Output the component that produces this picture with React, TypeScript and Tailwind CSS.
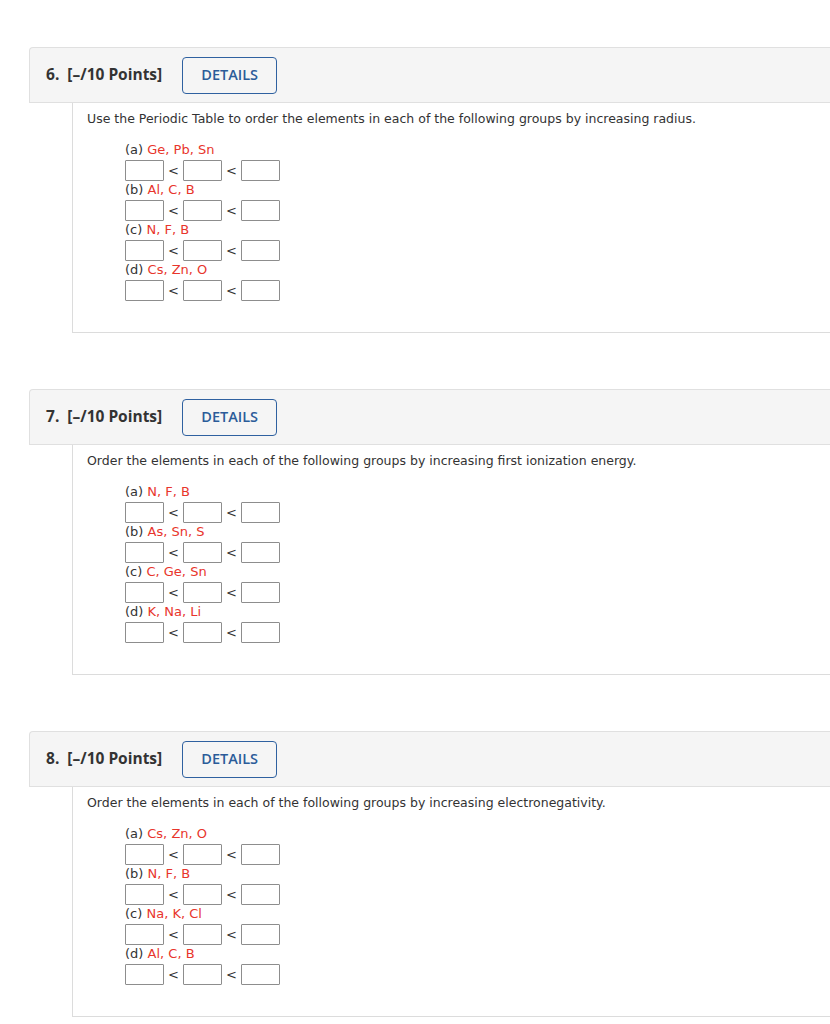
const questions = [
  {
    num: 6,
    prompt: "Use the Periodic Table to order the elements in each of the following groups by increasing radius.",
    parts: ["Ge, Pb, Sn", "Al, C, B", "N, F, B", "Cs, Zn, O"],
  },
  {
    num: 7,
    prompt: "Order the elements in each of the following groups by increasing first ionization energy.",
    parts: ["N, F, B", "As, Sn, S", "C, Ge, Sn", "K, Na, Li"],
  },
  {
    num: 8,
    prompt: "Order the elements in each of the following groups by increasing electronegativity.",
    parts: ["Cs, Zn, O", "N, F, B", "Na, K, Cl", "Al, C, B"],
  },
];

const letters = ["a", "b", "c", "d"];

function Box() {
  return <span className="block w-[39px] h-[21px] border border-[#8d8d8d] bg-white rounded-[1px]" />;
}

function Part({ letter, elements }: { letter: string; elements: string }) {
  return (
    <div>
      <div className="h-[18px] leading-[18px] text-[#333]">
        ({letter}) <span className="text-[#e8352c]">{elements}</span>
      </div>
      <div className="flex items-center h-[22px]">
        <Box />
        <span className="w-[19px] text-center text-[#333] pt-[2px]">&lt;</span>
        <Box />
        <span className="w-[19px] text-center text-[#333] pt-[2px]">&lt;</span>
        <Box />
      </div>
    </div>
  );
}

function Question({ num, prompt, parts }: { num: number; prompt: string; parts: string[] }) {
  return (
    <div className="mb-[56px]">
      <div className="h-[56px] flex items-center bg-[#f5f5f5] border border-r-0 border-[#e0e0e0] rounded-tl-[4px] pl-[16px]">
        <span className="text-[15.5px] font-bold text-[#333]" style={{ fontFamily: "'Open Sans', sans-serif" }}>
          {num}.&nbsp;&nbsp;[–/10 Points]
        </span>
        <button
          className="ml-[20px] w-[95px] h-[37px] border-[1.5px] border-[#2f61a0] rounded-[4px] text-[14.5px] font-semibold text-[#2b5c99] bg-transparent"
          style={{ fontFamily: "'Open Sans', sans-serif" }}
        >
          DETAILS
        </button>
      </div>
      <div
        className="ml-[43px] h-[230px] border-l border-b border-[#dcdcdc] pl-[14px] pt-[7px] text-[13px]"
        style={{ fontFamily: "'DejaVu Sans', Verdana, sans-serif" }}
      >
        <p className="leading-[18px] text-[12.5px] text-[#333]">{prompt}</p>
        <div className="ml-[38px] mt-[13px]">
          {parts.map((p, i) => (
            <Part key={i} letter={letters[i]} elements={p} />
          ))}
        </div>
      </div>
    </div>
  );
}

export default function App() {
  return (
    <div className="bg-white min-h-screen pt-[47px] pl-[29px] overflow-hidden">
      {questions.map((q) => (
        <Question key={q.num} {...q} />
      ))}
    </div>
  );
}
